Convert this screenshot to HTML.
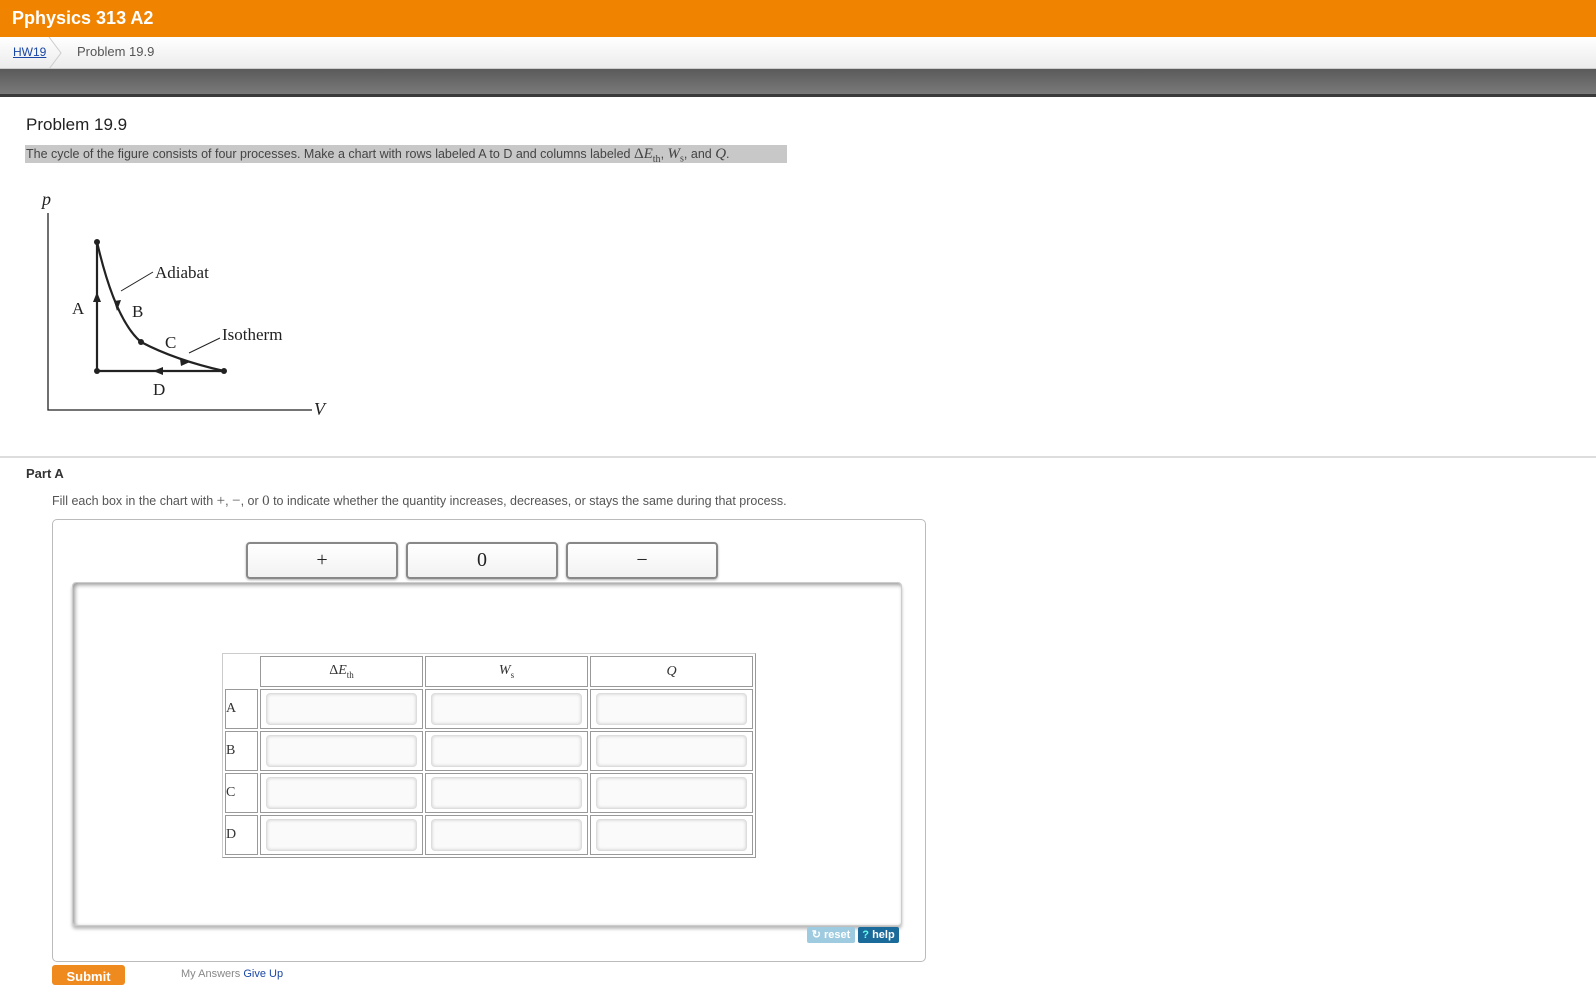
<!DOCTYPE html>
<html><head><meta charset="utf-8"><style>
*{box-sizing:border-box;margin:0;padding:0}
body{width:1596px;height:976px;overflow:hidden;background:#fff;font-family:"Liberation Sans",Arial,sans-serif;position:relative;color:#333}
.abs{position:absolute}
.top{left:0;top:0;width:1596px;height:37px;background:#f08300;color:#fff;font-weight:bold;font-size:18px;padding:8px 0 0 12px}
.crumb{left:0;top:37px;width:1596px;height:32px;background:linear-gradient(#fff,#ececec);border-bottom:1px solid #ccc;font-size:13px}
.dark{left:0;top:69px;width:1596px;height:28px;background:linear-gradient(#5a5a5a,#7a7a7a);border-bottom:3px solid #3a3a3a}
.serif{font-family:"Liberation Serif","Times New Roman",serif}
.btn{top:542px;width:152px;height:37px;border:2px solid #888;border-radius:4px;background:linear-gradient(#fff,#f2f2f2);box-shadow:0 1px 2px #aaa;text-align:center;font-family:"Liberation Serif",serif;font-size:20px;line-height:32px;color:#222}
table{border-collapse:separate;border-spacing:2px;border:1px solid #999;border-top-color:#ccc;border-left-color:#ccc;table-layout:fixed}
td{border:1px solid #999;font-family:"Liberation Serif",serif;font-size:14px;padding:0}
.in{margin:3px 5px;height:32px;border:1px solid #ddd;border-radius:4px;background:#fafafa;box-shadow:inset 0 0 3px #ccc}
</style></head><body>
<div class="abs top">Pphysics 313 A2</div>
<div class="abs crumb">
 <span class="abs" style="left:13px;top:8px;color:#1a47a6;text-decoration:underline;font-size:12px">HW19</span>
 <svg class="abs" style="left:48px;top:0" width="16" height="32"><path d="M1 0 L13 16 L1 32" fill="none" stroke="#ccc"/></svg>
 <span class="abs" style="left:77px;top:7px;color:#555">Problem 19.9</span>
</div>
<div class="abs dark"></div>
<div class="abs" style="left:26px;top:115px;font-size:17px;color:#222">Problem 19.9</div>
<div class="abs" style="left:25px;top:145px;width:762px;height:18px;background:#c8c8c8"></div>
<div class="abs" style="left:26px;top:146px;font-size:12.5px;color:#444;white-space:nowrap">The cycle of the figure consists of four processes. Make a chart with rows labeled A to D and columns labeled <span class="serif" style="font-size:15px">Δ<i>E</i><sub style="font-size:10px">th</sub></span>, <i class="serif" style="font-size:15px">W</i><sub class="serif" style="font-size:10px">s</sub>, and <i class="serif" style="font-size:15px">Q</i>.</div>

<svg class="abs" style="left:0;top:180px" width="340" height="250" font-family="Liberation Serif,serif" font-size="17" fill="#222">
 <text x="42" y="25" font-style="italic" font-size="18">p</text>
 <path d="M48 33 V230 H312" fill="none" stroke="#222" stroke-width="1.3"/>
 <text x="314" y="235" font-style="italic" font-size="18">V</text>
 <g stroke="#222" stroke-width="2.2" fill="none">
  <path d="M97 62 V191 H224"/>
  <path d="M97 62 Q115 140 141 162 Q175 180 224 191"/>
 </g>
 <g fill="#222">
  <circle cx="97" cy="62" r="3"/><circle cx="141" cy="162" r="3"/><circle cx="224" cy="191" r="3"/><circle cx="97" cy="191" r="3"/>
  <path d="M97 112 l-4 10 h8z"/><path d="M117 131 l-3 -10 l7 -1z"/><path d="M190 182 l-10 -3 l1 7z"/><path d="M153 191 l10 -4 v8z"/>
 </g>
 <path d="M121 111 L153 92 M189 173 L220 158" stroke="#222" stroke-width="1"/>
 <text x="155" y="98">Adiabat</text><text x="222" y="160">Isotherm</text>
 <text x="72" y="134">A</text><text x="132" y="137">B</text><text x="165" y="168">C</text><text x="153" y="215">D</text>
</svg>

<div class="abs" style="left:0;top:456px;width:1596px;height:2px;background:#ddd"></div>
<div class="abs" style="left:26px;top:466px;font-size:13px;font-weight:bold;color:#333">Part A</div>
<div class="abs" style="left:52px;top:493px;font-size:12.5px;color:#555">Fill each box in the chart with <span class="serif" style="font-size:15px">+</span>, <span class="serif" style="font-size:15px">−</span>, or <span class="serif" style="font-size:15px">0</span> to indicate whether the quantity increases, decreases, or stays the same during that process.</div>
<div class="abs" style="left:52px;top:519px;width:874px;height:443px;border:1px solid #bbb;border-radius:5px"></div>
<div class="abs btn" style="left:246px">+</div>
<div class="abs btn" style="left:406px">0</div>
<div class="abs btn" style="left:566px">−</div>
<div class="abs" style="left:72px;top:582px;width:830px;height:344px;border-radius:4px;background:#fff;box-shadow:inset 2px 2px 4px #999, 0 3px 3px #bbb;border:1px solid #ccc"></div>
<table class="abs" style="left:222px;top:653px;width:534px">
 <colgroup><col style="width:33px"><col><col><col></colgroup>
 <tr style="height:31px"><td style="border-color:#fff"></td><td style="text-align:center">Δ<i>E</i><sub style="font-size:9px">th</sub></td><td style="text-align:center"><i>W</i><sub style="font-size:9px">s</sub></td><td style="text-align:center"><i>Q</i></td></tr>
 <tr><td>A</td><td><div class="in"></div></td><td><div class="in"></div></td><td><div class="in"></div></td></tr>
 <tr><td>B</td><td><div class="in"></div></td><td><div class="in"></div></td><td><div class="in"></div></td></tr>
 <tr><td>C</td><td><div class="in"></div></td><td><div class="in"></div></td><td><div class="in"></div></td></tr>
 <tr><td>D</td><td><div class="in"></div></td><td><div class="in"></div></td><td><div class="in"></div></td></tr>
</table>
<div class="abs" style="left:807px;top:927px;width:48px;height:16px;background:#9fcbe0;border-radius:2px;color:#fff;font-size:11px;font-weight:bold;text-align:center;line-height:16px">↻ reset</div>
<div class="abs" style="left:858px;top:927px;width:41px;height:16px;background:#1a6a9a;border-radius:2px;color:#fff;font-size:11px;font-weight:bold;text-align:center;line-height:16px"><span style="color:#6fe">?</span> help</div>
<div class="abs" style="left:52px;top:965px;width:73px;height:20px;background:#ef8a1e;border-radius:3px;color:#fff;font-weight:bold;font-size:13px;text-align:center;padding-top:4px">Submit</div>
<div class="abs" style="left:181px;top:968px;font-size:11px;color:#888">My Answers <span style="color:#1a47a6">Give Up</span></div>
</body></html>
